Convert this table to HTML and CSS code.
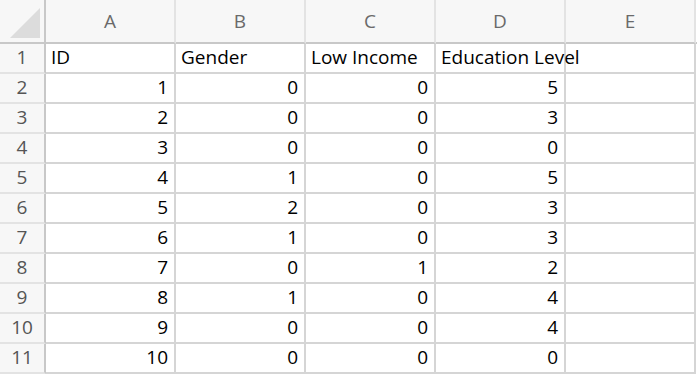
FILE: index.html
```html
<!DOCTYPE html>
<html>
<head>
<meta charset="utf-8">
<link rel="stylesheet" href="styles.css">
</head>
<body>
<div class="sheet">
  <div class="corner"><div class="tri"></div></div>
  <div class="colh">A</div>
  <div class="colh">B</div>
  <div class="colh">C</div>
  <div class="colh">D</div>
  <div class="colh">E</div>
  <div class="colh pad"></div>

  <div class="rowh">1</div>
  <div class="cell">ID</div>
  <div class="cell">Gender</div>
  <div class="cell">Low Income</div>
  <div class="cell">Education Level</div>
  <div class="cell"></div>
  <div class="pad"></div>

  <div class="rowh">2</div>
  <div class="cell num">1</div><div class="cell num">0</div><div class="cell num">0</div><div class="cell num">5</div><div class="cell"></div><div class="pad"></div>
  <div class="rowh">3</div>
  <div class="cell num">2</div><div class="cell num">0</div><div class="cell num">0</div><div class="cell num">3</div><div class="cell"></div><div class="pad"></div>
  <div class="rowh">4</div>
  <div class="cell num">3</div><div class="cell num">0</div><div class="cell num">0</div><div class="cell num">0</div><div class="cell"></div><div class="pad"></div>
  <div class="rowh">5</div>
  <div class="cell num">4</div><div class="cell num">1</div><div class="cell num">0</div><div class="cell num">5</div><div class="cell"></div><div class="pad"></div>
  <div class="rowh">6</div>
  <div class="cell num">5</div><div class="cell num">2</div><div class="cell num">0</div><div class="cell num">3</div><div class="cell"></div><div class="pad"></div>
  <div class="rowh">7</div>
  <div class="cell num">6</div><div class="cell num">1</div><div class="cell num">0</div><div class="cell num">3</div><div class="cell"></div><div class="pad"></div>
  <div class="rowh">8</div>
  <div class="cell num">7</div><div class="cell num">0</div><div class="cell num">1</div><div class="cell num">2</div><div class="cell"></div><div class="pad"></div>
  <div class="rowh">9</div>
  <div class="cell num">8</div><div class="cell num">1</div><div class="cell num">0</div><div class="cell num">4</div><div class="cell"></div><div class="pad"></div>
  <div class="rowh">10</div>
  <div class="cell num">9</div><div class="cell num">0</div><div class="cell num">0</div><div class="cell num">4</div><div class="cell"></div><div class="pad"></div>
  <div class="rowh">11</div>
  <div class="cell num">10</div><div class="cell num">0</div><div class="cell num">0</div><div class="cell num">0</div><div class="cell"></div><div class="pad"></div>
</div>
</body>
</html>
```

FILE: styles.css
```css
html, body {
  margin: 0;
  padding: 0;
  background: #ffffff;
}

.sheet {
  display: grid;
  grid-template-columns: 46px repeat(5, 130px) 1fr;
  grid-template-rows: 44px repeat(11, 30px);
  width: 697px;
  font-family: "Open Sans", "Noto Sans", sans-serif;
  font-size: 19px;
  line-height: 20px;
}

.corner {
  background: #f7f7f7;
  border-right: 2px solid #c8c8c8;
  border-bottom: 2px solid #c8c8c8;
  box-sizing: border-box;
  position: relative;
}

.tri {
  position: absolute;
  left: 10px;
  top: 8px;
  width: 30px;
  height: 30px;
  background: #dcdcdc;
  clip-path: polygon(100% 0, 100% 100%, 0 100%);
}

.colh {
  background: #f7f7f7;
  border-right: 2px solid #e3e3e3;
  border-bottom: 2px solid #c8c8c8;
  box-sizing: border-box;
  display: flex;
  align-items: flex-start;
  justify-content: center;
  color: #6a6a6a;
  padding-top: 11px;
}

.colh.pad {
  border-right: none;
}

.rowh {
  background: #f7f7f7;
  border-right: 2px solid #c8c8c8;
  border-bottom: 2px solid #e3e3e3;
  box-sizing: border-box;
  display: flex;
  align-items: flex-end;
  justify-content: center;
  color: #555555;
  padding-bottom: 5px;
}

.cell {
  border-right: 2px solid #d5d5d5;
  border-bottom: 2px solid #d5d5d5;
  box-sizing: border-box;
  display: flex;
  align-items: flex-end;
  padding: 0 6px 5px 5px;
  color: #000000;
  white-space: nowrap;
}

.cell.num {
  justify-content: flex-end;
}

.pad {
  background: #ffffff;
}
```
